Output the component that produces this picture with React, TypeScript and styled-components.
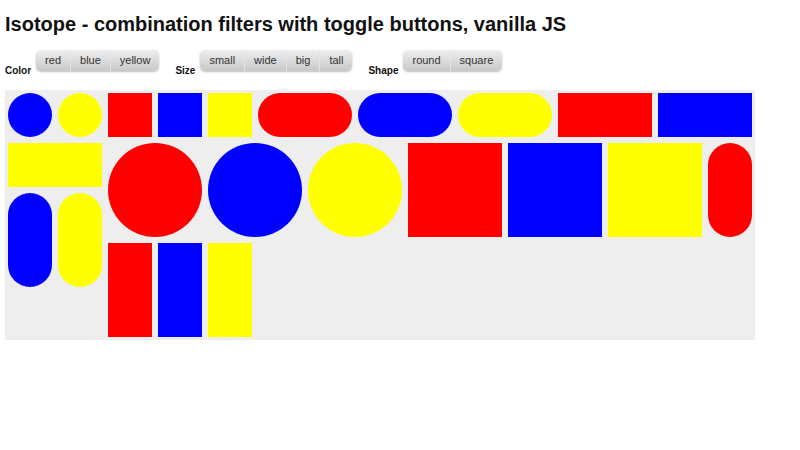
import styled, { createGlobalStyle } from 'styled-components';

const GlobalStyle = createGlobalStyle`
  body {
    margin: 0;
    font-family: "Liberation Sans", Arial, sans-serif;
    background: #fff;
    color: #111;
  }
`;

const Page = styled.div`
  padding: 0 5px;
`;

const Title = styled.h1`
  margin: 12px 0 0;
  font-size: 20px;
  line-height: 24px;
  font-weight: bold;
`;

const Filters = styled.div`
  display: flex;
  gap: 16px;
  margin-top: 14px;
`;

const UiGroup = styled.div`
  display: flex;
  align-items: flex-start;
  gap: 5px;
`;

const GroupLabel = styled.h3`
  margin: 16px 0 0;
  font-size: 10px;
  line-height: 10px;
  font-weight: bold;
`;

const ButtonGroup = styled.div`
  display: flex;
  border-radius: 5px;
  box-shadow: 0 1px 2px rgba(0, 0, 0, 0.25);
`;

const FilterButton = styled.button`
  height: 21px;
  padding: 0 9px;
  border: none;
  border-left: 1px solid #e4e4e4;
  background: linear-gradient(#eeeeee, #c8c8c8);
  color: #333;
  font-family: "Liberation Sans", Arial, sans-serif;
  font-size: 11px;
  line-height: 21px;
  cursor: pointer;

  &:first-child {
    border-left: none;
    border-radius: 5px 0 0 5px;
  }

  &:last-child {
    border-radius: 0 5px 5px 0;
  }
`;

const Grid = styled.div`
  display: grid;
  width: 750px;
  grid-template-columns: repeat(15, 50px);
  grid-template-rows: repeat(5, 50px);
  margin-top: 14px;
  background: #eeeeee;
`;

type Size = 'small' | 'wide' | 'big' | 'tall';
type Shape = 'round' | 'square';

const spans: Record<Size, [number, number]> = {
  small: [1, 1],
  wide: [2, 1],
  big: [2, 2],
  tall: [1, 2],
};

const Item = styled.div<{ $size: Size; $shape: Shape; $color: string }>`
  margin: 3px;
  grid-column: span ${(p) => spans[p.$size][0]};
  grid-row: span ${(p) => spans[p.$size][1]};
  background: ${(p) => p.$color};
  border-radius: ${(p) => (p.$shape === 'round' ? '47px' : '0')};
`;

const colors: Record<string, string> = {
  red: '#ff0000',
  blue: '#0000ff',
  yellow: '#ffff00',
};

const items: { color: string; size: Size; shape: Shape }[] = [
  { color: 'blue', size: 'small', shape: 'round' },
  { color: 'yellow', size: 'small', shape: 'round' },
  { color: 'red', size: 'small', shape: 'square' },
  { color: 'blue', size: 'small', shape: 'square' },
  { color: 'yellow', size: 'small', shape: 'square' },
  { color: 'red', size: 'wide', shape: 'round' },
  { color: 'blue', size: 'wide', shape: 'round' },
  { color: 'yellow', size: 'wide', shape: 'round' },
  { color: 'red', size: 'wide', shape: 'square' },
  { color: 'blue', size: 'wide', shape: 'square' },
  { color: 'yellow', size: 'wide', shape: 'square' },
  { color: 'red', size: 'big', shape: 'round' },
  { color: 'blue', size: 'big', shape: 'round' },
  { color: 'yellow', size: 'big', shape: 'round' },
  { color: 'red', size: 'big', shape: 'square' },
  { color: 'blue', size: 'big', shape: 'square' },
  { color: 'yellow', size: 'big', shape: 'square' },
  { color: 'red', size: 'tall', shape: 'round' },
  { color: 'blue', size: 'tall', shape: 'round' },
  { color: 'yellow', size: 'tall', shape: 'round' },
  { color: 'red', size: 'tall', shape: 'square' },
  { color: 'blue', size: 'tall', shape: 'square' },
  { color: 'yellow', size: 'tall', shape: 'square' },
];

const groups = [
  { label: 'Color', options: ['red', 'blue', 'yellow'] },
  { label: 'Size', options: ['small', 'wide', 'big', 'tall'] },
  { label: 'Shape', options: ['round', 'square'] },
];

export default function App() {
  return (
    <Page>
      <GlobalStyle />
      <Title>Isotope - combination filters with toggle buttons, vanilla JS</Title>
      <Filters>
        {groups.map((group) => (
          <UiGroup key={group.label}>
            <GroupLabel>{group.label}</GroupLabel>
            <ButtonGroup>
              {group.options.map((option) => (
                <FilterButton key={option}>{option}</FilterButton>
              ))}
            </ButtonGroup>
          </UiGroup>
        ))}
      </Filters>
      <Grid>
        {items.map((item, i) => (
          <Item
            key={i}
            $size={item.size}
            $shape={item.shape}
            $color={colors[item.color]}
          />
        ))}
      </Grid>
    </Page>
  );
}
